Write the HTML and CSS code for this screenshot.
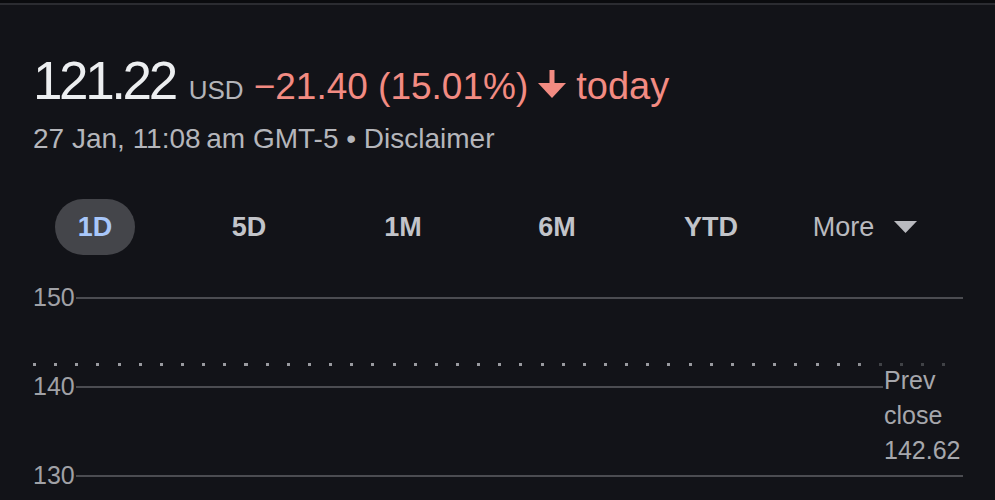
FILE: index.html
```html
<!DOCTYPE html>
<html lang="en">
<head>
    <meta charset="UTF-8">
    <meta name="viewport" content="width=device-width, initial-scale=1.0">
    <title>Stock Quote</title>
    <link rel="stylesheet" href="styles.css">
</head>
<body>
    <div class="topbar"></div>

    <div class="quote">
        <div class="price-row">
            <span class="price">121.22</span>
            <span class="currency">USD</span>
            <span class="change">&minus;21.40 (15.01%)</span>
            <svg class="down-arrow" width="28" height="30" viewBox="0 0 28 30">
                <rect x="11.5" y="0" width="5" height="15" fill="#f28b82"/>
                <polygon points="0,13 28,13 14,28" fill="#f28b82"/>
            </svg>
            <span class="change today">today</span>
        </div>
        <div class="timestamp">27 Jan, 11:08&#8201;am GMT-5 &bull; Disclaimer</div>
    </div>

    <div class="tabs">
        <div class="tab"><span class="tab-label active">1D</span></div>
        <div class="tab"><span class="tab-label">5D</span></div>
        <div class="tab"><span class="tab-label">1M</span></div>
        <div class="tab"><span class="tab-label">6M</span></div>
        <div class="tab"><span class="tab-label">YTD</span></div>
        <div class="tab">
            <span class="tab-label more">More</span>
            <svg class="caret" width="23" height="12" viewBox="0 0 23 12">
                <polygon points="0,0 23,0 11.5,12" fill="#b9babf"/>
            </svg>
        </div>
    </div>

    <div class="chart">
        <div class="grid-row">
            <span class="axis-label">150</span>
            <div class="grid-line"></div>
        </div>
        <div class="grid-row">
            <span class="axis-label">140</span>
            <div class="grid-line short"></div>
        </div>
        <div class="grid-row">
            <span class="axis-label">130</span>
            <div class="grid-line"></div>
        </div>

        <!-- previous close marker -->
        <div class="prev-line"></div>
        <div class="prev-label">Prev<br>close<br>142.62</div>
    </div>
</body>
</html>
```

FILE: styles.css
```css
body {
    margin: 0;
    background: #121318;
    font-family: "Liberation Sans", Arial, sans-serif;
    color: #e8e9ec;
    overflow: hidden;
}

.topbar {
    height: 3px;
    background: #0a0b0e;
    border-bottom: 2px solid #2b2c31;
}

.quote {
    padding: 0 32px 0 33px;
}

.price-row {
    display: flex;
    align-items: baseline;
    gap: 10px;
    margin-top: 49px;
    line-height: 1;
}
.price {
    font-size: 53px;
    letter-spacing: -3.4px;
    color: #eceef0;
    margin-right: 4px;
}
.currency {
    font-size: 26px;
    color: #b3b4b9;
}
.change {
    font-size: 37px;
    color: #f28b82;
}
.change.today {
    font-size: 38px;
    margin-left: 2px;
}
.down-arrow {
    align-self: center;
    margin: 8px -2px 0 0;
}

.timestamp {
    margin-top: 18px;
    font-size: 28px;
    line-height: 1;
    color: #b5b6bb;
}

.tabs {
    display: flex;
    padding-left: 18px;
    margin-top: 46px;
}
.tab {
    width: 154px;
    height: 56px;
    display: flex;
    align-items: center;
    justify-content: center;
    gap: 20px;
}
.tab-label {
    font-size: 27px;
    font-weight: bold;
    color: #c2c4c9;
}
.tab-label.active {
    height: 56px;
    line-height: 56px;
    padding: 0 23px;
    border-radius: 28px;
    background: #44454a;
    color: #a8c7fa;
}
.tab-label.more {
    font-weight: normal;
    color: #b9babf;
}

.chart {
    position: relative;
    padding: 0 32px 0 33px;
    margin-top: 30px;
    display: flex;
    flex-direction: column;
    gap: 64px;
}
.grid-row {
    display: flex;
    align-items: center;
    height: 25px;
}
.axis-label {
    width: 43px;
    font-size: 25px;
    line-height: 25px;
    color: #a0a1a6;
}
.grid-line {
    flex: 1;
    height: 2px;
    background: #4b4c51;
}
.grid-line.short {
    margin-right: 80px;
}

.prev-line {
    position: absolute;
    left: 33px;
    right: 47px;
    top: 78px;
    height: 3px;
    background: repeating-linear-gradient(to right, #999a9f 0 3px, transparent 3px 21.15px);
    -webkit-mask-image: linear-gradient(to right, #000 90%, rgba(0, 0, 0, 0.35) 92%);
    mask-image: linear-gradient(to right, #000 90%, rgba(0, 0, 0, 0.35) 92%);
}
.prev-label {
    position: absolute;
    left: 884px;
    top: 78px;
    font-size: 25px;
    line-height: 35px;
    color: #a6a7ac;
}
```
